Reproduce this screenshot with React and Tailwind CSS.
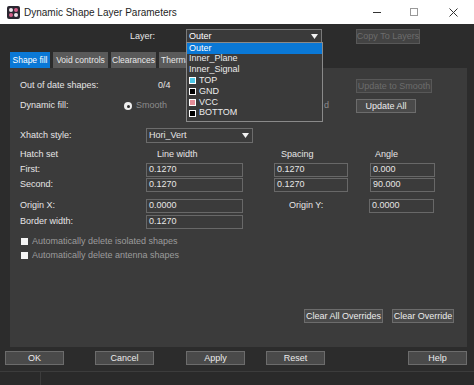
import React from 'react';

const font = { fontFamily: '"Liberation Sans", Arial, sans-serif' };

function Btn({ children, className = '', disabled }) {
  return (
    <div
      className={`flex items-center justify-center whitespace-nowrap border text-[9px] leading-none ${
        disabled
          ? 'bg-[#434343] border-[#585858] text-[#6c6c6c]'
          : 'bg-[#4a4a4a] border-[#6c6c6c] text-[#ececec]'
      } ${className}`}
    >
      {children}
    </div>
  );
}

function Field({ value, className = '' }) {
  return (
    <div className={`h-[14px] border border-[#686868] bg-[#3b3b3b] flex items-center pl-[2px] text-[9px] text-[#e6e6e6] ${className}`}>
      {value}
    </div>
  );
}

function Caret() {
  return (
    <svg width="7" height="5" viewBox="0 0 7 5" className="shrink-0">
      <path d="M0 0H7L3.5 5Z" fill="#f2f2f2" />
    </svg>
  );
}

function Check({ label }) {
  return (
    <div className="flex items-center h-[13px] pl-[11px]">
      <div className="w-[7px] h-[7px] bg-[#f4f4f4]" />
      <span className="ml-[4px] text-[9px] text-[#9c9c9c]">{label}</span>
    </div>
  );
}

const layers = [
  { name: 'Outer', sel: true },
  { name: 'Inner_Plane' },
  { name: 'Inner_Signal' },
  { name: 'TOP', sw: 'bg-[#4cc7e6]' },
  { name: 'GND', sw: 'bg-black' },
  { name: 'VCC', sw: 'bg-[#e48d98]' },
  { name: 'BOTTOM', sw: 'bg-black' },
];

export default function App() {
  return (
    <div className="relative w-[474px] h-[385px] overflow-hidden bg-[#2c2c2c]" style={font}>
      {/* Title bar */}
      <div className="h-[24px] bg-white flex items-center">
        <svg width="13" height="13" viewBox="0 0 13 13" className="ml-[7px]">
          <rect width="13" height="13" rx="2" fill="#2a2630" />
          <circle cx="4" cy="4" r="2" fill="#f0e6ec" />
          <circle cx="9" cy="4" r="2" fill="#d65f8a" />
          <circle cx="4" cy="9" r="2" fill="#d65f8a" />
          <circle cx="9" cy="9" r="2" fill="#f0e6ec" />
        </svg>
        <span className="ml-[4px] text-[10px] text-[#1e1e1e]">Dynamic Shape Layer Parameters</span>
        <div className="ml-auto flex items-center h-full">
          <div className="w-[8px] h-px bg-[#333]" />
          <div className="ml-[29px] w-[8px] h-[8px] border border-[#999]" />
          <svg width="9" height="9" viewBox="0 0 9 9" className="ml-[31px] mr-[16px]">
            <path d="M0.5 0.5L8.5 8.5M8.5 0.5L0.5 8.5" stroke="#333" strokeWidth="1" />
          </svg>
        </div>
      </div>

      {/* Layer row */}
      <div className="mt-[5px] h-[15px] flex items-center">
        <span className="ml-[130px] w-[56px] text-[9px] text-[#e6e6e6]">Layer:</span>
        <div className="w-[136px] h-[15px] border border-[#7a7a7a] bg-[#3a3a3a] flex items-center pl-[2px] pr-[3px] text-[9px] text-white">
          <span className="flex-1">Outer</span>
          <Caret />
        </div>
        <Btn disabled className="ml-[34px] w-[64px] h-[15px]">Copy To Layers</Btn>
      </div>

      {/* Tabs */}
      <div className="mt-[8px] h-[16px] flex items-stretch pl-[10px] gap-[3px] text-[8.5px] whitespace-nowrap">
        <div className="w-[40px] bg-[#0a78d6] text-white flex items-center justify-center">Shape fill</div>
        <div className="w-[55px] bg-[#5a5a5a] text-[#e8e8e8] flex items-center justify-center">Void controls</div>
        <div className="w-[45px] bg-[#5a5a5a] text-[#e8e8e8] flex items-center justify-center">Clearances</div>
        <div className="w-[28px] overflow-hidden bg-[#5a5a5a] text-[#e8e8e8] flex items-center pl-[2px]">Therma</div>
      </div>

      {/* Panel */}
      <div className="ml-[10px] w-[457px] h-[279px] bg-[#3b3b3b] flex flex-col text-[9px] text-[#e6e6e6]">
        <div className="mt-[11px] h-[14px] flex items-center pl-[10px]">
          <span className="w-[138px]">Out of date shapes:</span>
          <span>0/4</span>
          <Btn disabled className="ml-auto mr-[35px] w-[76px] h-[14px]">Update to Smooth</Btn>
        </div>

        <div className="mt-[6px] h-[14px] flex items-center pl-[10px]">
          <span className="w-[104px]">Dynamic fill:</span>
          <div className="w-[8px] h-[8px] rounded-full bg-[#eeeeee] flex items-center justify-center">
            <div className="w-[3px] h-[3px] rounded-full bg-[#2c2c2c]" />
          </div>
          <span className="ml-[4px] text-[#8c8c8c]">Smooth</span>
          <span className="ml-[157px] text-[#8c8c8c]">d</span>
          <Btn className="ml-auto mr-[51px] w-[60px] h-[14px]">Update All</Btn>
        </div>

        <div className="mt-[15px] h-[15px] flex items-center pl-[10px]">
          <span className="w-[126px]">Xhatch style:</span>
          <div className="w-[107px] h-[15px] border border-[#6c6c6c] bg-[#3b3b3b] flex items-center pl-[2px] pr-[3px]">
            <span className="flex-1">Hori_Vert</span>
            <Caret />
          </div>
        </div>

        <div className="mt-[6px] h-[12px] flex items-center pl-[10px]">
          <span className="w-[137px]">Hatch set</span>
          <span className="w-[124px]">Line width</span>
          <span className="w-[94px]">Spacing</span>
          <span>Angle</span>
        </div>

        <div className="mt-[2px] flex items-center pl-[10px]">
          <span className="w-[126px]">First:</span>
          <Field value="0.1270" className="w-[97px]" />
          <Field value="0.1270" className="ml-[31px] w-[74px]" />
          <Field value="0.000" className="ml-[22px] w-[65px]" />
        </div>
        <div className="mt-[1px] flex items-center pl-[10px]">
          <span className="w-[126px]">Second:</span>
          <Field value="0.1270" className="w-[97px]" />
          <Field value="0.1270" className="ml-[31px] w-[74px]" />
          <Field value="90.000" className="ml-[22px] w-[65px]" />
        </div>

        <div className="mt-[7px] flex items-center pl-[10px]">
          <span className="w-[126px]">Origin X:</span>
          <Field value="0.0000" className="w-[97px]" />
          <span className="ml-[46px] w-[80px]">Origin Y:</span>
          <Field value="0.0000" className="w-[65px]" />
        </div>
        <div className="mt-[2px] flex items-center pl-[10px]">
          <span className="w-[126px]">Border width:</span>
          <Field value="0.1270" className="w-[97px]" />
        </div>

        <div className="mt-[6px]">
          <Check label="Automatically delete isolated shapes" />
        </div>
        <div className="mt-[1px]">
          <Check label="Automatically delete antenna shapes" />
        </div>

        <div className="mt-[47px] flex items-center justify-end pr-[13px] gap-[9px]">
          <Btn className="w-[79px] h-[14px]">Clear All Overrides</Btn>
          <Btn className="w-[62px] h-[14px]">Clear Override</Btn>
        </div>
      </div>

      {/* Bottom buttons */}
      <div className="mt-[4px] h-[14px] flex items-center">
        <Btn className="ml-[5px] w-[59px] h-[14px]">OK</Btn>
        <Btn className="ml-[31px] w-[59px] h-[14px]">Cancel</Btn>
        <Btn className="ml-[32px] w-[59px] h-[14px]">Apply</Btn>
        <Btn className="ml-[21px] w-[59px] h-[14px]">Reset</Btn>
        <Btn className="ml-auto mr-[7px] w-[59px] h-[14px]">Help</Btn>
      </div>

      {/* Status bar */}
      <div className="mt-[6px] h-[14px] border-t border-[#3c3c3c] bg-[#2a2a2a] flex">
        <div className="w-[41px] border-r border-[#3c3c3c]" />
      </div>

      {/* Layer dropdown list */}
      <div className="absolute left-[186px] top-[42px] w-[137px] h-[80px] bg-[#3a3a3a] border border-[#8a8a8a] text-[9px] text-[#ececec] z-10">
        {layers.map((l) => (
          <div
            key={l.name}
            className={`h-[10.8px] flex items-center pl-[2px] ${l.sel ? 'bg-[#0a78d6] text-white' : ''}`}
          >
            {l.sw && <div className={`w-[7px] h-[7px] border border-white mr-[3px] ${l.sw}`} />}
            {l.name}
          </div>
        ))}
      </div>
    </div>
  );
}
